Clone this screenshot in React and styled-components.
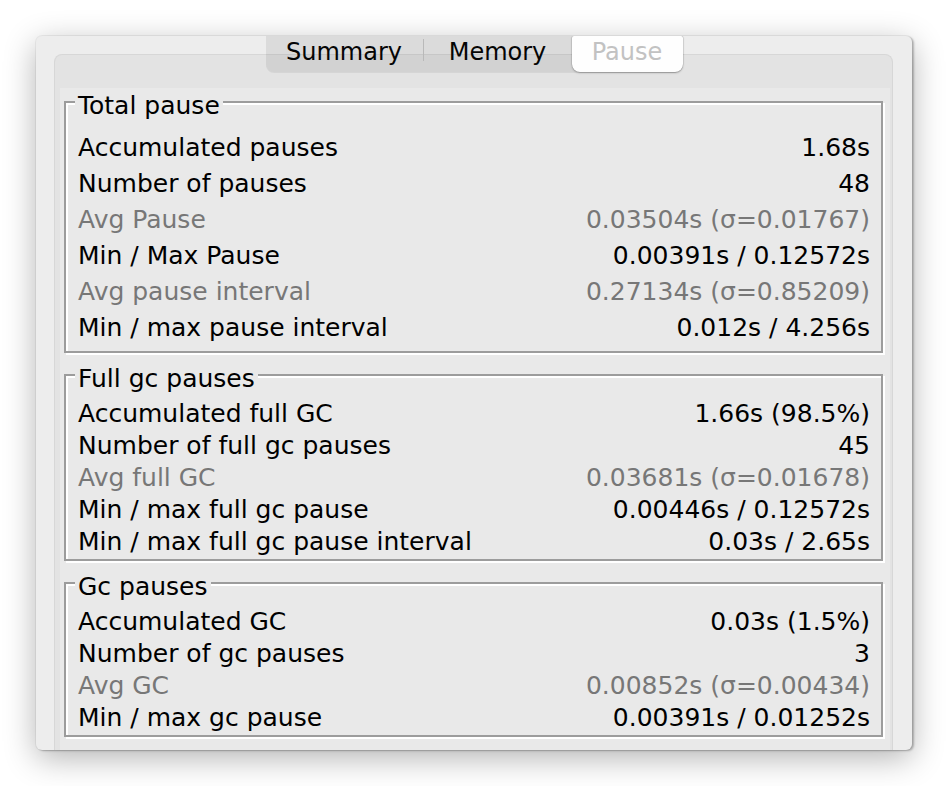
import React from "react";
import styled, { createGlobalStyle } from "styled-components";

const Global = createGlobalStyle`
  html, body { margin: 0; padding: 0; background: #ffffff; }
  body { font-family: "DejaVu Sans", "Liberation Sans", sans-serif; }
  * { box-sizing: border-box; }
`;

const Page = styled.div`
  padding: 36px 0 0 36px;
  width: 950px;
  height: 786px;
  overflow: hidden;
`;

const Window = styled.div`
  width: 876px;
  height: 714px;
  background: #ededed;
  border-radius: 6px;
  box-shadow: 2px 1px 2px rgba(0, 0, 0, 0.24), 0 0 0 1px rgba(0, 0, 0, 0.05),
    0 8px 32px rgba(0, 0, 0, 0.3);
  padding: 0 19px 0 18px;
  display: flex;
  flex-direction: column;
  overflow: hidden;
`;

const TabBar = styled.div`
  position: relative;
  z-index: 2;
  align-self: center;
  display: flex;
  height: 36px;
  margin-left: 1px;
  background: rgba(0, 0, 0, 0.075);
  border-radius: 0 0 8px 8px;
  box-shadow: 0 1px 0 rgba(0, 0, 0, 0.06);
`;

const Tab = styled.div`
  position: relative;
  height: 36px;
  width: ${(p) => p.$w}px;
  display: flex;
  align-items: flex-start;
  justify-content: center;
  padding-top: 1px;
  font-size: 24px;
  line-height: 30px;
  color: ${(p) => (p.$active ? "#c2c2c2" : "#050505")};
  background: ${(p) => (p.$active ? "#fefefe" : "transparent")};
  border-radius: ${(p) => (p.$active ? "2px 2px 8px 8px" : "0")};
  box-shadow: ${(p) =>
    p.$active ? "0 1px 2px rgba(0,0,0,0.28), 0 0 0 0.5px rgba(0,0,0,0.12)" : "none"};
  text-shadow: ${(p) => (p.$active ? "1px 1px 0 #ffffff" : "none")};
`;

const Separator = styled.div`
  width: 1px;
  height: 22px;
  margin-top: 3px;
  background: #b9b9b9;
`;

const Pane = styled.div`
  position: relative;
  z-index: 1;
  flex: 1;
  margin-top: -18px;
  background: #e3e3e3;
  border: 1px solid #d7d7d7;
  border-bottom: none;
  border-radius: 8px 8px 0 0;
  padding: 33px 2px 0 5px;
  display: flex;
  flex-direction: column;
`;

const Content = styled.div`
  flex: 1;
  background: #e9e9e9;
  padding: 13px 7px 0 4px;
  display: flex;
  flex-direction: column;
  gap: 21px;
`;

const Group = styled.section`
  border: 2px solid #9c9c9c;
  box-shadow: inset 2px 2px 0 #ffffff, 2px 2px 0 #ffffff;
  padding: 0 11px ${(p) => p.$padBottom}px 9px;
  display: flex;
  flex-direction: column;
`;

const Title = styled.div`
  align-self: flex-start;
  margin-top: -11px;
  padding: 0 3px;
  height: 27px;
  font-size: 25px;
  line-height: 28px;
  color: #000000;
  background: #e9e9e9;
  white-space: nowrap;
`;

const Rows = styled.div`
  padding: ${(p) => p.$padTop}px 0 0 3px;
  display: flex;
  flex-direction: column;
`;

const Row = styled.div`
  display: flex;
  justify-content: space-between;
  align-items: center;
  height: ${(p) => p.$h}px;
  font-size: 25px;
  line-height: ${(p) => p.$h}px;
  color: ${(p) => (p.$muted ? "#777777" : "#000000")};
  white-space: nowrap;
`;

const groups = [
  {
    title: "Total pause",
    rowH: 36,
    padTop: 11,
    padBottom: 5,
    rows: [
      ["Accumulated pauses", "1.68s"],
      ["Number of pauses", "48"],
      ["Avg Pause", "0.03504s (σ=0.01767)", true],
      ["Min / Max Pause", "0.00391s / 0.12572s"],
      ["Avg pause interval", "0.27134s (σ=0.85209)", true],
      ["Min / max pause interval", "0.012s / 4.256s"],
    ],
  },
  {
    title: "Full gc pauses",
    rowH: 32,
    padTop: 6,
    padBottom: 1,
    rows: [
      ["Accumulated full GC", "1.66s (98.5%)"],
      ["Number of full gc pauses", "45"],
      ["Avg full GC", "0.03681s (σ=0.01678)", true],
      ["Min / max full gc pause", "0.00446s / 0.12572s"],
      ["Min / max full gc pause interval", "0.03s / 2.65s"],
    ],
  },
  {
    title: "Gc pauses",
    rowH: 32,
    padTop: 6,
    padBottom: 1,
    rows: [
      ["Accumulated GC", "0.03s (1.5%)"],
      ["Number of gc pauses", "3"],
      ["Avg GC", "0.00852s (σ=0.00434)", true],
      ["Min / max gc pause", "0.00391s / 0.01252s"],
    ],
  },
];

export default function App() {
  return (
    <>
      <Global />
      <Page>
        <Window>
          <TabBar>
            <Tab $w={157}>Summary</Tab>
            <Separator />
            <Tab $w={148}>Memory</Tab>
            <Tab $w={111} $active>
              Pause
            </Tab>
          </TabBar>
          <Pane>
            <Content>
              {groups.map((g) => (
                <Group key={g.title} $padBottom={g.padBottom}>
                  <Title>{g.title}</Title>
                  <Rows $padTop={g.padTop}>
                    {g.rows.map(([label, value, muted]) => (
                      <Row key={label} $h={g.rowH} $muted={muted}>
                        <span>{label}</span>
                        <span>{value}</span>
                      </Row>
                    ))}
                  </Rows>
                </Group>
              ))}
            </Content>
          </Pane>
        </Window>
      </Page>
    </>
  );
}
